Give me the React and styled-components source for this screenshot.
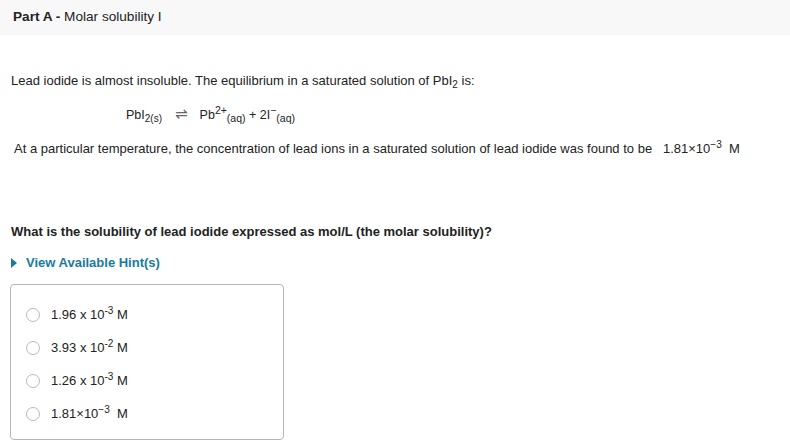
import React from 'react';
import styled, { createGlobalStyle } from 'styled-components';

const GlobalStyle = createGlobalStyle`
  body {
    margin: 0;
    background: #fff;
    font-family: "Liberation Sans", Arial, sans-serif;
    color: #222;
  }
`;

const Header = styled.div`
  height: 35px;
  background: #f8f8f8;
  padding: 0 13px 3px;
  display: flex;
  align-items: center;
  font-size: 13.6px;
  color: #222;
  box-sizing: border-box;
`;

const Body = styled.div`
  padding: 38px 11px 0;
  display: flex;
  flex-direction: column;
  font-size: 13px;
  line-height: 16px;
  color: #222;
`;

const Intro = styled.div`
  display: flex;
  flex-direction: column;
  gap: 18px;
`;

const Para = styled.p`
  margin: 0;
  padding-left: ${(p) => (p.$indent ? 3 : 0)}px;
`;

const Eq = styled.div`
  padding-left: 115px;
  font-size: 12.5px;
  display: flex;
  align-items: baseline;
`;

const Arrow = styled.span`
  margin: 0 12px 0 13px;
  font-family: "DejaVu Sans", sans-serif;
  font-size: 15px;
  line-height: 0;
  color: #666;
`;

const Sub = styled.span`
  font-size: ${(p) => p.$size || 10}px;
  line-height: 0;
  vertical-align: -3px;
`;

const Sup = styled.span`
  font-size: ${(p) => p.$size || 10}px;
  line-height: 0;
  vertical-align: 5px;
`;

const Ask = styled.div`
  margin-top: 67px;
  display: flex;
  flex-direction: column;
  gap: 15px;
`;

const Question = styled.p`
  margin: 0;
  font-weight: bold;
`;

const Hint = styled.div`
  display: flex;
  align-items: center;
  gap: 9px;
  color: #1a7a9e;
  font-weight: bold;
`;

const Triangle = styled.span`
  width: 0;
  height: 0;
  border-top: 5px solid transparent;
  border-bottom: 5px solid transparent;
  border-left: 6px solid #1a7a9e;
`;

const Choices = styled.div`
  margin: 13px 0 0 -1px;
  width: 274px;
  height: 156px;
  box-sizing: border-box;
  border: 1px solid #b5b5b5;
  border-radius: 4px;
  padding: 22px 0 0 15px;
  display: flex;
  flex-direction: column;
  gap: 17px;
`;

const Choice = styled.label`
  display: flex;
  align-items: center;
  gap: 11px;
  font-size: 13px;
  color: #222;
`;

const Radio = styled.span`
  width: 14px;
  height: 14px;
  border-radius: 50%;
  border: 1px solid #b9b9b9;
  box-sizing: border-box;
  background: #fff;
`;

const options = [
  { a: '1.96 x 10', e: '-3', b: ' M' },
  { a: '3.93 x 10', e: '-2', b: ' M' },
  { a: '1.26 x 10', e: '-3', b: ' M' },
  { a: '1.81×10', e: '−3', b: '\u00a0 M' },
];

export default function App() {
  return (
    <>
      <GlobalStyle />
      <Header>
        <span><b>Part A -</b> Molar solubility I</span>
      </Header>
      <Body>
        <Intro>
          <Para>
            Lead iodide is almost insoluble. The equilibrium in a saturated solution of PbI<Sub>2</Sub> is:
          </Para>
          <Eq>
            <span>PbI<Sub>2(s)</Sub></span>
            <Arrow>⇌</Arrow>
            <span>
              Pb<Sup $size={10.5}>2+</Sup><Sub $size={10.5}>(aq)</Sub> + 2I<Sup $size={10.5}>−</Sup><Sub $size={10.5}>(aq)</Sub>
            </span>
          </Eq>
          <Para $indent>
            At a particular temperature, the concentration of lead ions in a saturated solution of lead iodide was found to be&nbsp;&nbsp; 1.81×10<Sup>−3</Sup>&nbsp; M
          </Para>
        </Intro>
        <Ask>
          <Question>What is the solubility of lead iodide expressed as mol/L (the molar solubility)?</Question>
          <Hint>
            <Triangle />
            View Available Hint(s)
          </Hint>
        </Ask>
        <Choices>
          {options.map((o, i) => (
            <Choice key={i}>
              <Radio />
              <span>
                {o.a}<Sup>{o.e}</Sup>{o.b}
              </span>
            </Choice>
          ))}
        </Choices>
      </Body>
    </>
  );
}
